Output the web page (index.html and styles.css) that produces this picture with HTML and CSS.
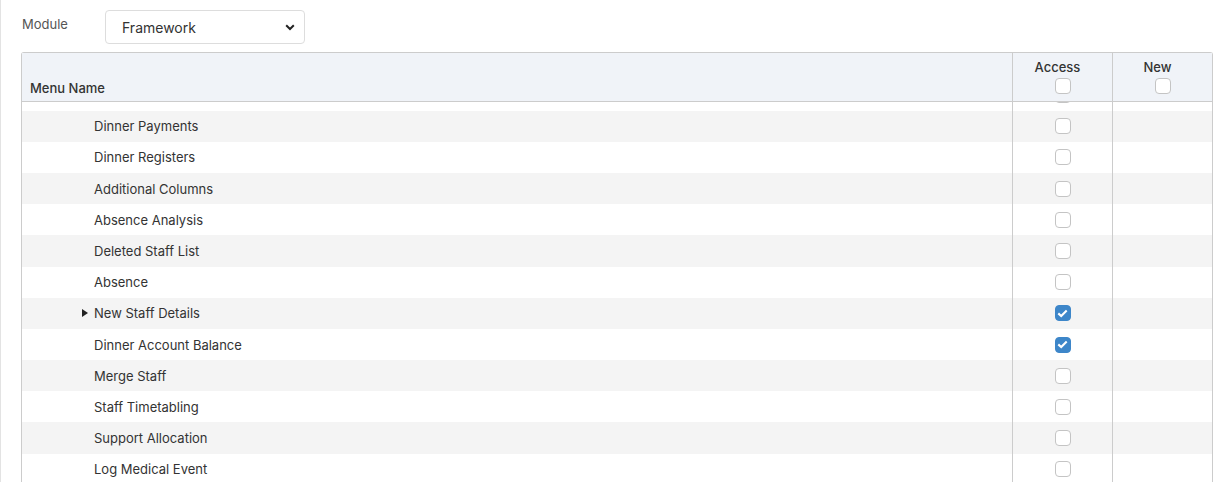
FILE: index.html
```html
<!DOCTYPE html>
<html>
<head>
<meta charset="utf-8">
<link rel="stylesheet" href="styles.css">
</head>
<body>
<div class="page">
  <div class="form-row">
    <label class="label">Module</label>
    <div class="select">
      <span>Framework</span>
      <svg class="chev" width="10" height="7" viewBox="0 0 10 7"><path d="M1.2 1.3 L5 5 L8.8 1.3" fill="none" stroke="#222" stroke-width="2"/></svg>
    </div>
  </div>
  <div class="table">
    <div class="thead">
      <div class="th th-name">Menu Name</div>
      <div class="th th-col"><span class="th-text">Access</span><span class="cb"></span></div>
      <div class="th th-col"><span class="th-text">New</span><span class="cb"></span></div>
    </div>
    <div class="tbody">
      <div class="rows">
        <div class="row"><div class="name"></div><div class="col"><span class="cb"></span></div><div class="col"></div></div>
        <div class="row alt"><div class="name">Dinner Payments</div><div class="col"><span class="cb"></span></div><div class="col"></div></div>
        <div class="row"><div class="name">Dinner Registers</div><div class="col"><span class="cb"></span></div><div class="col"></div></div>
        <div class="row alt"><div class="name">Additional Columns</div><div class="col"><span class="cb"></span></div><div class="col"></div></div>
        <div class="row"><div class="name">Absence Analysis</div><div class="col"><span class="cb"></span></div><div class="col"></div></div>
        <div class="row alt"><div class="name">Deleted Staff List</div><div class="col"><span class="cb"></span></div><div class="col"></div></div>
        <div class="row"><div class="name">Absence</div><div class="col"><span class="cb"></span></div><div class="col"></div></div>
        <div class="row alt"><div class="name"><span class="caret"></span>New Staff Details</div><div class="col"><span class="cb checked"><svg width="11" height="9" viewBox="0 0 11 9"><path d="M1.3 4.4 L4.2 7 L9.7 1.6" fill="none" stroke="#fff" stroke-width="2.1"/></svg></span></div><div class="col"></div></div>
        <div class="row"><div class="name">Dinner Account Balance</div><div class="col"><span class="cb checked"><svg width="11" height="9" viewBox="0 0 11 9"><path d="M1.3 4.4 L4.2 7 L9.7 1.6" fill="none" stroke="#fff" stroke-width="2.1"/></svg></span></div><div class="col"></div></div>
        <div class="row alt"><div class="name">Merge Staff</div><div class="col"><span class="cb"></span></div><div class="col"></div></div>
        <div class="row"><div class="name">Staff Timetabling</div><div class="col"><span class="cb"></span></div><div class="col"></div></div>
        <div class="row alt"><div class="name">Support Allocation</div><div class="col"><span class="cb"></span></div><div class="col"></div></div>
        <div class="row"><div class="name">Log Medical Event</div><div class="col"><span class="cb"></span></div><div class="col"></div></div>
      </div>
    </div>
  </div>
</div>
</body>
</html>
```
FILE: styles.css
```css
html, body {
  margin: 0;
  padding: 0;
  height: 100%;
  overflow: hidden;
  background: #fff;
}
body {
  font-family: Inter, "Noto Sans", sans-serif;
  color: #333;
}
.page {
  border-left: 1px solid #e3e3e3;
  height: 100%;
  box-sizing: border-box;
  padding: 10px 1px 0 20px;
}
.form-row {
  display: flex;
  align-items: flex-start;
  height: 34px;
}
.label {
  font-size: 13px;
  color: #555;
  width: 83px;
  padding-left: 1px;
  line-height: 28px;
}
.select {
  width: 200px;
  height: 34px;
  box-sizing: border-box;
  border: 1px solid #ddd;
  border-radius: 4px;
  display: flex;
  align-items: center;
  justify-content: space-between;
  padding: 0 9px 0 16px;
  font-size: 14px;
  color: #333;
}
.chev { display: block; }
.table {
  margin-top: 8px;
  border: 1px solid #ccc;
  border-bottom: none;
  border-radius: 3px 3px 0 0;
}
.thead {
  display: flex;
  height: 48px;
  background: #f0f3f8;
  border-bottom: 1px solid #ccc;
}
.th {
  font-size: 13px;
  font-weight: 500;
  color: #333;
}
.th-name {
  flex: 1;
  padding-left: 8px;
  display: flex;
  align-items: flex-end;
  padding-bottom: 5px;
}
.th-col {
  width: 100px;
  box-sizing: border-box;
  border-left: 1px solid #ccc;
  display: flex;
  flex-direction: column;
  align-items: center;
  padding-top: 6px;
  gap: 3px;
}
.th-text {
  padding-right: 10px;
  line-height: 16px;
}
.tbody {
  height: 400px;
  overflow: hidden;
}
.rows {
  margin-top: -22.6px;
}
.row {
  display: flex;
  height: 31.2px;
  background: #fff;
}
.row.alt { background: #f4f4f4; }
.name {
  flex: 1;
  display: flex;
  align-items: center;
  padding-left: 72px;
  font-size: 13px;
  color: #333;
}
.caret {
  width: 0;
  height: 0;
  border-top: 4px solid transparent;
  border-bottom: 4px solid transparent;
  border-left: 6px solid #222;
  margin-left: -12px;
  margin-right: 6px;
}
.col {
  width: 100px;
  box-sizing: border-box;
  border-left: 1px solid #ccc;
  display: flex;
  align-items: center;
  justify-content: center;
}
.cb {
  width: 16px;
  height: 16px;
  box-sizing: border-box;
  border: 1px solid #c4c4c4;
  border-radius: 4px;
  background: #fff;
  display: flex;
  align-items: center;
  justify-content: center;
}
.cb.checked {
  background: #3d86c9;
  border-color: #3d86c9;
}
```
